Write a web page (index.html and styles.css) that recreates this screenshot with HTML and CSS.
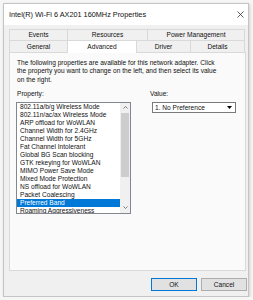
FILE: index.html
```html
<!DOCTYPE html>
<html lang="en">
<head>
    <meta charset="UTF-8">
    <title>Intel(R) Wi-Fi 6 AX201 160MHz Properties</title>
    <link rel="stylesheet" href="styles.css">
</head>
<body>
    <div class="window">
        <div class="titlebar">
            <span class="title">Intel(R) Wi-Fi 6 AX201 160MHz Properties</span>
            <svg class="close" width="7" height="7" viewBox="0 0 7 7">
                <path d="M0.5 0.5 L6.5 6.5 M6.5 0.5 L0.5 6.5" stroke="#333" stroke-width="0.8" fill="none"/>
            </svg>
        </div>

        <div class="main">
            <div class="tabs">
                <div class="tab-row back">
                    <div class="tab tab-events">Events</div>
                    <div class="tab tab-resources">Resources</div>
                    <div class="tab tab-power">Power Management</div>
                </div>
                <div class="tab-row front">
                    <div class="tab tab-general">General</div>
                    <div class="tab tab-advanced active">Advanced</div>
                    <div class="tab tab-driver">Driver</div>
                    <div class="tab tab-details">Details</div>
                </div>
            </div>

            <div class="panel">
                <p class="intro">The following properties are available for this network adapter. Click<br>the property you want to change on the left, and then select its value<br>on the right.</p>

                <div class="columns">
                    <div class="col-prop">
                        <div class="label">Property:</div>
                        <div class="listbox">
                            <ul class="items">
                                <li>802.11a/b/g Wireless Mode</li>
                                <li>802.11n/ac/ax Wireless Mode</li>
                                <li>ARP offload for WoWLAN</li>
                                <li>Channel Width for 2.4GHz</li>
                                <li>Channel Width for 5GHz</li>
                                <li>Fat Channel Intolerant</li>
                                <li>Global BG Scan blocking</li>
                                <li>GTK rekeying for WoWLAN</li>
                                <li>MIMO Power Save Mode</li>
                                <li>Mixed Mode Protection</li>
                                <li>NS offload for WoWLAN</li>
                                <li>Packet Coalescing</li>
                                <li class="selected">Preferred Band</li>
                                <li>Roaming Aggressiveness</li>
                            </ul>
                            <div class="scrollbar">
                                <div class="sb-btn">
                                    <svg width="5" height="3" viewBox="0 0 5 3"><path d="M0.5 2.5 L2.5 0.5 L4.5 2.5" stroke="#606060" stroke-width="0.8" fill="none"/></svg>
                                </div>
                                <div class="sb-thumb"></div>
                                <div class="sb-track"></div>
                                <div class="sb-btn">
                                    <svg width="5" height="3" viewBox="0 0 5 3"><path d="M0.5 0.5 L2.5 2.5 L4.5 0.5" stroke="#606060" stroke-width="0.8" fill="none"/></svg>
                                </div>
                            </div>
                        </div>
                    </div>

                    <div class="col-value">
                        <div class="label">Value:</div>
                        <div class="select">
                            <span>1. No Preference</span>
                            <svg width="5" height="3" viewBox="0 0 5 3"><path d="M0 0 L5 0 L2.5 3 Z" fill="#000"/></svg>
                        </div>
                    </div>
                </div>
            </div>

            <div class="buttons">
                <button class="btn default">OK</button>
                <button class="btn">Cancel</button>
            </div>
        </div>
    </div>
</body>
</html>
```

FILE: styles.css
```css
body {
    margin: 0;
    background-color: #f6f6f6;
    font-family: "Liberation Sans", Arial, sans-serif;
    font-size: 6.6px;
    color: #111;
}
.window {
    margin: 3px 0 0 3px;
    width: 246px;
    height: 294px;
    box-sizing: border-box;
    border: 1px solid #c4c4c4;
    background-color: #f0f0f0;
    box-shadow: 1px 1px 3px rgba(0, 0, 0, 0.15);
    display: flex;
    flex-direction: column;
}
.titlebar {
    height: 21px;
    flex: none;
    background-color: #fff;
    display: flex;
    align-items: center;
    justify-content: space-between;
    padding: 0 4px 0 5px;
    font-size: 7.3px;
}
.close {
    display: block;
}
.main {
    flex: 1;
    padding: 4px 2px 0 5px;
    display: flex;
    flex-direction: column;
}
.tab-row {
    display: flex;
}
.tab {
    box-sizing: border-box;
    flex: none;
    text-align: center;
    border: 1px solid #d9d9d9;
    border-bottom: none;
    margin-right: -1px;
    background-color: #f0f0f0;
}
.back .tab {
    height: 11px;
    line-height: 10px;
}
.front .tab {
    height: 12px;
    line-height: 11px;
}
.tab-events { width: 59px; }
.tab-resources { width: 81px; }
.tab-power { width: 98px; }
.tab-general { width: 59px; }
.tab-advanced { width: 70px; }
.tab-driver { width: 55px; }
.tab-details { width: 55px; }
.tab.active {
    position: relative;
    background-color: #fff;
    height: 13px;
    margin-bottom: -1px;
}
.panel {
    flex: none;
    height: 219px;
    box-sizing: border-box;
    border: 1px solid #d9d9d9;
    background-color: #fafafa;
    padding: 6px 7px 0 7px;
}
.intro {
    margin: 0;
    line-height: 8.3px;
}
.columns {
    display: flex;
    margin-top: 6px;
}
.label {
    line-height: 8px;
    margin-bottom: 4px;
}
.col-prop {
    margin-left: -1px;
}
.col-prop .label {
    margin-left: 1px;
}
.listbox {
    width: 115px;
    height: 112px;
    box-sizing: border-box;
    border: 1px solid #828790;
    background-color: #fff;
    display: flex;
    overflow: hidden;
}
.items {
    flex: 1;
    list-style: none;
    margin: 0;
    padding: 0;
}
.items li {
    height: 8px;
    line-height: 8px;
    padding-left: 3px;
    white-space: nowrap;
}
.items li.selected {
    background-color: #0078d7;
    color: #fff;
}
.scrollbar {
    width: 10px;
    flex: none;
    background-color: #f0f0f0;
    display: flex;
    flex-direction: column;
}
.sb-btn {
    height: 10px;
    flex: none;
    display: flex;
    align-items: center;
    justify-content: center;
}
.sb-thumb {
    height: 64px;
    flex: none;
    margin: 0 1px;
    background-color: #cdcdcd;
}
.sb-track {
    flex: 1;
}
.col-value {
    margin-left: 19px;
}
.select {
    margin-left: 2px;
    width: 84px;
    height: 11px;
    box-sizing: border-box;
    border: 1px solid #7a7a7a;
    background-color: #fff;
    display: flex;
    align-items: center;
    justify-content: space-between;
    padding: 0 3px 0 2px;
}
.select svg {
    display: block;
}
.buttons {
    display: flex;
    justify-content: flex-end;
    gap: 4px;
    margin-top: 7px;
    margin-right: -1px;
}
.btn {
    width: 46px;
    height: 13px;
    padding: 0;
    box-sizing: border-box;
    border: 1px solid #adadad;
    background-color: #e1e1e1;
    font-family: "Liberation Sans", Arial, sans-serif;
    font-size: 6.6px;
    color: #111;
}
.btn.default {
    border-color: #0078d7;
}
```
